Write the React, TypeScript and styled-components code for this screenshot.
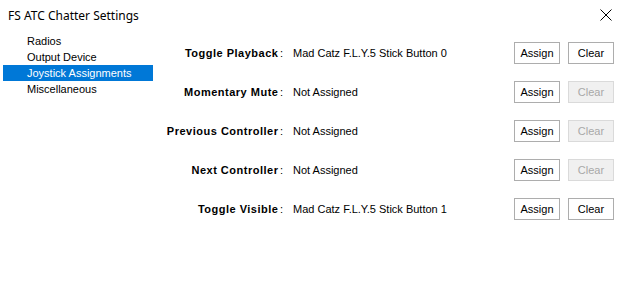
import React from 'react';
import styled, { createGlobalStyle } from 'styled-components';

const GlobalStyle = createGlobalStyle`
    html, body {
        margin: 0;
        padding: 0;
        background: #ffffff;
    }
    body {
        font-family: 'Liberation Sans', Arial, sans-serif;
        font-size: 11px;
        color: #000000;
    }
`;

const Window = styled.div`
    width: 622px;
    height: 282px;
    background: #ffffff;
    overflow: hidden;
`;

const TitleBar = styled.div`
    height: 31px;
    display: flex;
    align-items: center;
    justify-content: space-between;
    padding: 0 10px 0 8px;
    box-sizing: border-box;
`;

const Title = styled.div`
    font-family: 'Noto Sans', 'Open Sans', sans-serif;
    font-size: 12px;
    color: #000000;
    margin-top: -1px;
`;

const CloseIcon = styled.svg`
    width: 12px;
    height: 12px;
    margin-top: -2px;
`;

const Body = styled.div`
    display: flex;
    padding-top: 2px;
`;

const Sidebar = styled.ul`
    list-style: none;
    margin: 0 0 0 3px;
    padding: 0;
    width: 150px;
`;

const SidebarItem = styled.li<{ selected?: boolean }>`
    height: 16px;
    line-height: 16px;
    padding-left: 24px;
    white-space: nowrap;
    background: ${p => (p.selected ? '#0078d7' : 'transparent')};
    color: ${p => (p.selected ? '#ffffff' : '#000000')};
`;

const Assignments = styled.div`
    display: grid;
    grid-template-columns: 130px 215px 46px 46px;
    column-gap: 8px;
    row-gap: 17px;
    align-items: center;
    margin-top: 9px;
`;

const Label = styled.div`
    text-align: right;
    font-weight: bold;
    white-space: nowrap;
`;

const LabelText = styled.span`
    letter-spacing: 0.5px;
    margin-right: -0.5px;
`;

const Colon = styled.span`
    font-weight: normal;
    margin-left: 2px;
`;

const Value = styled.div`
    padding-left: 2px;
    white-space: nowrap;
`;

const Button = styled.button`
    height: 22px;
    width: 46px;
    padding: 0;
    font-family: 'Liberation Sans', Arial, sans-serif;
    font-size: 11px;
    color: #000000;
    background: #ffffff;
    border: 1px solid #adadad;
    border-radius: 0;

    &:disabled {
        color: #a8a8a8;
        background: #f0f0f0;
        border-color: #dadada;
    }
`;

const rows = [
    { label: 'Toggle Playback', value: 'Mad Catz F.L.Y.5 Stick Button 0', assigned: true },
    { label: 'Momentary Mute', value: 'Not Assigned', assigned: false },
    { label: 'Previous Controller', value: 'Not Assigned', assigned: false },
    { label: 'Next Controller', value: 'Not Assigned', assigned: false },
    { label: 'Toggle Visible', value: 'Mad Catz F.L.Y.5 Stick Button 1', assigned: true },
];

const App = () => (
    <Window>
        <GlobalStyle />
        <TitleBar>
            <Title>FS ATC Chatter Settings</Title>
            <CloseIcon viewBox="0 0 12 12">
                <path d="M0.5 0.5 L11.5 11.5 M11.5 0.5 L0.5 11.5" stroke="#000" strokeWidth="1" fill="none" />
            </CloseIcon>
        </TitleBar>
        <Body>
            <Sidebar>
                <SidebarItem>Radios</SidebarItem>
                <SidebarItem>Output Device</SidebarItem>
                <SidebarItem selected>Joystick Assignments</SidebarItem>
                <SidebarItem>Miscellaneous</SidebarItem>
            </Sidebar>
            <Assignments>
                {rows.map(row => (
                    <React.Fragment key={row.label}>
                        <Label>
                            <LabelText>{row.label}</LabelText>
                            <Colon>:</Colon>
                        </Label>
                        <Value>{row.value}</Value>
                        <Button>Assign</Button>
                        <Button disabled={!row.assigned}>Clear</Button>
                    </React.Fragment>
                ))}
            </Assignments>
        </Body>
    </Window>
);

export default App;
